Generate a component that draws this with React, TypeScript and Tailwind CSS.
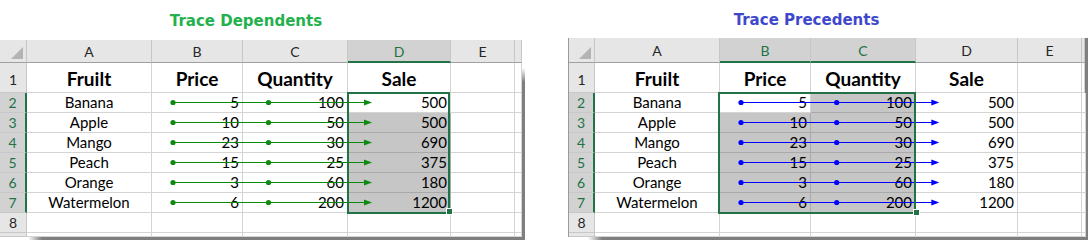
import React from "react";

const DATA: string[][] = [
  ["Banana", "5", "100", "500"],
  ["Apple", "10", "50", "500"],
  ["Mango", "23", "30", "690"],
  ["Peach", "15", "25", "375"],
  ["Orange", "3", "60", "180"],
  ["Watermelon", "6", "200", "1200"],
];

const HEAD = ["Fruilt", "Price", "Quantity", "Sale"];
const LETTERS = ["A", "B", "C", "D", "E", ""];

type Cfg = {
  gridClass: string;
  wrapClass: string;
  selCols: number[];
  activeCol: number;
  color: string;
  lineY0: number;
  dots: number[];
  tip: number;
  selBoxClass: string;
  handleClass: string;
};

function Corner() {
  return (
    <div className="relative bg-[#e6e6e6] border-r border-b border-r-[#c6c6c6] border-b-[#a0a0a0]">
      <svg className="absolute right-[3px] bottom-[3px]" width="12" height="12" viewBox="0 0 12 12">
        <polygon points="12,0 12,12 0,12" fill="#b4b4b4" />
      </svg>
    </div>
  );
}

function Sheet({ cfg }: { cfg: Cfg }) {
  const cells: React.ReactNode[] = [];
  cells.push(<Corner key="corner" />);
  LETTERS.forEach((l, i) => {
    const c = i + 1;
    const sel = cfg.selCols.includes(c);
    cells.push(
      <div
        key={"h" + c}
        className={
          sel
            ? "flex items-center justify-center bg-[#d2d2d2] text-[#217346] border-r border-r-[#c6c6c6] border-b-2 border-b-[#217346] text-[14px] pt-[1px]"
            : "flex items-center justify-center bg-[#e6e6e6] text-[#262626] border-r border-r-[#c6c6c6] border-b border-b-[#a0a0a0] text-[14px]"
        }
      >
        {l}
      </div>
    );
  });
  for (let r = 1; r <= 9; r++) {
    const rowSel = r >= 2 && r <= 7;
    cells.push(
      <div
        key={"r" + r}
        className={
          rowSel
            ? "flex items-center justify-center bg-[#d2d2d2] text-[#217346] border-b border-b-[#c8c8c8] border-r-2 border-r-[#217346] text-[14px]"
            : r === 1
            ? "flex items-end justify-center pb-[2px] bg-[#e6e6e6] text-[#262626] border-b border-b-[#c8c8c8] border-r border-r-[#c6c6c6] text-[14px]"
            : "flex items-center justify-center bg-[#e6e6e6] text-[#262626] border-b border-b-[#c8c8c8] border-r border-r-[#c6c6c6] text-[14px]"
        }
      >
        {r <= 8 ? r : ""}
      </div>
    );
    for (let c = 1; c <= 6; c++) {
      const inSel = rowSel && cfg.selCols.includes(c);
      const active = inSel && r === 2 && c === cfg.activeCol;
      let text = "";
      if (r === 1 && c <= 4) text = HEAD[c - 1];
      if (r >= 2 && r <= 7 && c <= 4) text = DATA[r - 2][c - 1];
      let cls = "flex overflow-hidden whitespace-nowrap text-black border-r border-b ";
      if (inSel && !active) cls += "bg-[#c6c6c6] border-[#a9a9a9] ";
      else cls += "bg-white border-[#d4d4d4] ";
      if (r === 1) cls += "items-end justify-center font-bold text-[19px] leading-[24px] pb-[1px]";
      else if (c === 1) cls += "items-end justify-center text-[15px] leading-[19px]";
      else cls += "items-end justify-end pr-[3px] text-[15px] leading-[19px]";
      cells.push(
        <div key={"c" + r + "-" + c} className={cls}>
          {text}
        </div>
      );
    }
  }

  return (
    <div className={cfg.wrapClass}>
      <div className={cfg.gridClass}>{cells}</div>
      <svg className="absolute inset-0 pointer-events-none" width="100%" height="100%">
        {DATA.map((_, i) => {
          const y = cfg.lineY0 + i * 20;
          return (
            <g key={i}>
              <line x1={cfg.dots[0]} y1={y} x2={cfg.tip - 6} y2={y} stroke={cfg.color} strokeWidth="1.2" />
              {cfg.dots.map((d) => (
                <circle key={d} cx={d} cy={y} r="2.6" fill={cfg.color} />
              ))}
              <polygon
                points={`${cfg.tip},${y} ${cfg.tip - 8},${y - 3} ${cfg.tip - 8},${y + 3}`}
                fill={cfg.color}
              />
            </g>
          );
        })}
      </svg>
      <div className={cfg.selBoxClass} />
      <div className={cfg.handleClass} />
    </div>
  );
}

const LEFT: Cfg = {
  wrapClass: "relative",
  gridClass:
    "grid grid-cols-[27px_125px_91px_105px_103px_64px_7px] grid-rows-[23px_30px_repeat(7,20px)_4px] font-['Lato',sans-serif]",
  selCols: [4],
  activeCol: 4,
  color: "#0b8a0b",
  lineY0: 62.5,
  dots: [173, 268.5],
  tip: 372,
  selBoxClass: "absolute left-[347px] top-[52px] w-[103px] h-[122px] border-2 border-[#217346] pointer-events-none",
  handleClass: "absolute left-[446px] top-[168px] w-[7px] h-[7px] bg-[#217346] border border-white",
};

const RIGHT: Cfg = {
  wrapClass: "relative border-l border-[#9a9a9a]",
  gridClass:
    "grid grid-cols-[26px_125px_91px_105px_102px_64px_3px] grid-rows-[25px_30px_repeat(7,20px)_4px] font-['Lato',sans-serif]",
  selCols: [2, 3],
  activeCol: 2,
  color: "#0000ff",
  lineY0: 64.5,
  dots: [172, 267.7],
  tip: 370.3,
  selBoxClass: "absolute left-[149px] top-[54px] w-[198px] h-[122px] border-2 border-[#217346] pointer-events-none",
  handleClass: "absolute left-[344px] top-[171px] w-[7px] h-[7px] bg-[#217346] border border-white",
};

export default function App() {
  return (
    <div className="w-[1092px] h-[243px] bg-white flex items-start overflow-hidden">
      <div className="flex flex-col w-[525px]">
        <div className="h-[40px] flex items-center justify-center pr-[33px] pt-[2px]">
          <span className="font-['DejaVu_Sans',sans-serif] font-bold text-[15px] text-[#22b14c]">
            Trace Dependents
          </span>
        </div>
        <div className="flex">
          <Sheet cfg={LEFT} />
          <div className="w-[3px] mt-[28px] bg-[linear-gradient(to_bottom,#ffffff,#7f7f7f_14px)]" />
        </div>
        <div className="h-[3px] ml-[28px] bg-[linear-gradient(to_right,#ffffff,#7f7f7f_14px)]" />
      </div>
      <div className="flex flex-col ml-[43px] w-[520px]">
        <div className="h-[38px] flex items-center justify-center pr-[43px] pt-[2px]">
          <span className="font-['DejaVu_Sans',sans-serif] font-bold text-[15px] text-[#3f48cc]">
            Trace Precedents
          </span>
        </div>
        <div className="flex">
          <Sheet cfg={RIGHT} />
          <div className="w-[3px] bg-[#7f7f7f]" />
        </div>
        <div className="h-[3px] ml-[20px] bg-[linear-gradient(to_right,#ffffff,#7f7f7f_14px)]" />
      </div>
    </div>
  );
}
